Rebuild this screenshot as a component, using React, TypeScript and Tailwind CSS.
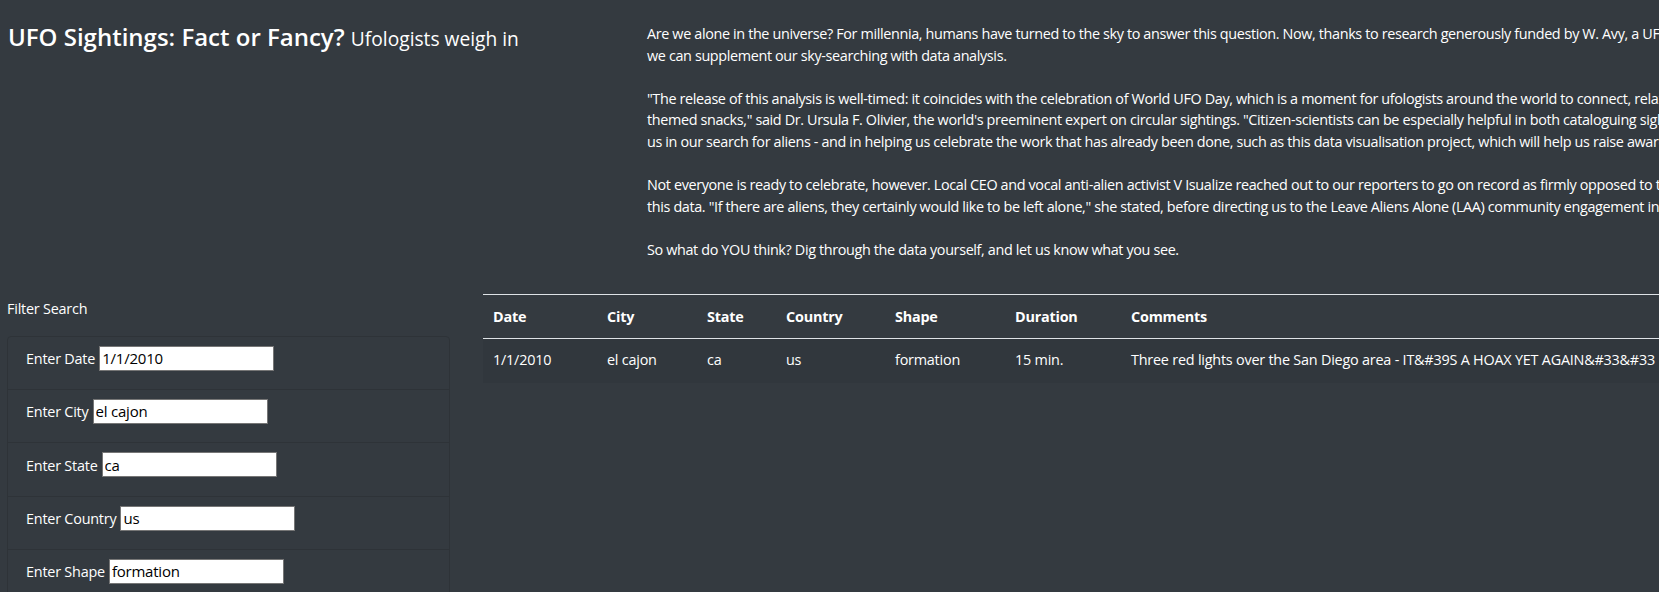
const paragraphs: string[][] = [
  [
    'Are we alone in the universe? For millennia, humans have turned to the sky to answer this question. Now, thanks to research generously funded by W. Avy, a UFO enthusiast and data analyst,',
    'we can supplement our sky-searching with data analysis.',
  ],
  [
    '"The release of this analysis is well-timed: it coincides with the celebration of World UFO Day, which is a moment for ufologists around the world to connect, relax, and enjoy',
    'themed snacks," said Dr. Ursula F. Olivier, the world\'s preeminent expert on circular sightings. "Citizen-scientists can be especially helpful in both cataloguing sightings and helping',
    'us in our search for aliens - and in helping us celebrate the work that has already been done, such as this data visualisation project, which will help us raise awareness."',
  ],
  [
    'Not everyone is ready to celebrate, however. Local CEO and vocal anti-alien activist V Isualize reached out to our reporters to go on record as firmly opposed to the publication of',
    'this data. "If there are aliens, they certainly would like to be left alone," she stated, before directing us to the Leave Aliens Alone (LAA) community engagement initiative.',
  ],
  ['So what do YOU think? Dig through the data yourself, and let us know what you see.'],
];

const filters = [
  { id: 'datetime', label: 'Enter Date', value: '1/1/2010' },
  { id: 'city', label: 'Enter City', value: 'el cajon' },
  { id: 'state', label: 'Enter State', value: 'ca' },
  { id: 'country', label: 'Enter Country', value: 'us' },
  { id: 'shape', label: 'Enter Shape', value: 'formation' },
];

const sightings = [
  {
    datetime: '1/1/2010',
    city: 'el cajon',
    state: 'ca',
    country: 'us',
    shape: 'formation',
    duration: '15 min.',
    comments: 'Three red lights over the San Diego area - IT&#39S A HOAX YET AGAIN&#33&#33',
  },
];

export default function App() {
  return (
    <div className="h-screen w-full overflow-hidden bg-[#343a40] text-white font-['Open_Sans',sans-serif] text-[14.4px] leading-[1.5] tracking-[-0.015em]">
      <div className="w-[2400px]">
        {/* Encabezado + texto */}
        <div className="flex pt-[23px]">
          <div className="w-[647px] pl-[8px]">
            <h1 className="text-[24px] leading-[1.2] font-semibold whitespace-nowrap tracking-normal">
              UFO Sightings: Fact or Fancy?{' '}
              <small className="text-[19.2px] font-normal">Ufologists weigh in</small>
            </h1>
          </div>
          <div className="flex flex-col tracking-[-0.025em]">
            {paragraphs.map((lines, i) => (
              <div key={i} className={i > 0 ? 'mt-[21.6px]' : ''}>
                {lines.map((line, j) => (
                  <p key={j} className="whitespace-nowrap">{line}</p>
                ))}
              </div>
            ))}
          </div>
        </div>

        {/* Filtros + tabla */}
        <div className="flex items-start mt-[33px]">
          <div className="w-[443px] ml-[7px] pt-[4.6px] shrink-0">
            <p className="mb-[15.8px]">Filter Search</p>
            <ul className="border border-[#2e3338] rounded-[4px]">
              {filters.map((f, i) => (
                <li
                  key={f.id}
                  className={`flex items-baseline h-[53.33px] pl-[18px] pt-[9px] ${i < filters.length - 1 ? 'border-b border-[#2e3338]' : ''}`}
                >
                  <label htmlFor={f.id} className="mr-[4px]">{f.label}</label>
                  <input
                    id={f.id}
                    type="text"
                    defaultValue={f.value}
                    className="w-[175px] h-[25px] bg-white text-black border border-[#767676] px-[2px] text-[15px] outline-none"
                  />
                </li>
              ))}
            </ul>
          </div>

          <table className="ml-[33px] w-[1800px] table-fixed border-collapse text-left">
            <colgroup>
              <col className="w-[114px]" />
              <col className="w-[100px]" />
              <col className="w-[79px]" />
              <col className="w-[109px]" />
              <col className="w-[120px]" />
              <col className="w-[116px]" />
              <col />
            </colgroup>
            <thead>
              <tr className="border-t border-b border-[#dee2e6]">
                {['Date', 'City', 'State', 'Country', 'Shape', 'Duration', 'Comments'].map((h) => (
                  <th key={h} className="font-bold px-[10px] py-[11px]">{h}</th>
                ))}
              </tr>
            </thead>
            <tbody>
              {sightings.map((s, i) => (
                <tr key={i} className="bg-[#31373d]">
                  <td className="px-[10px] pt-[10px] pb-[12px]">{s.datetime}</td>
                  <td className="px-[10px] pt-[10px] pb-[12px]">{s.city}</td>
                  <td className="px-[10px] pt-[10px] pb-[12px]">{s.state}</td>
                  <td className="px-[10px] pt-[10px] pb-[12px]">{s.country}</td>
                  <td className="px-[10px] pt-[10px] pb-[12px]">{s.shape}</td>
                  <td className="px-[10px] pt-[10px] pb-[12px]">{s.duration}</td>
                  <td className="px-[10px] pt-[10px] pb-[12px] whitespace-nowrap">{s.comments}</td>
                </tr>
              ))}
            </tbody>
          </table>
        </div>
      </div>
    </div>
  );
}
